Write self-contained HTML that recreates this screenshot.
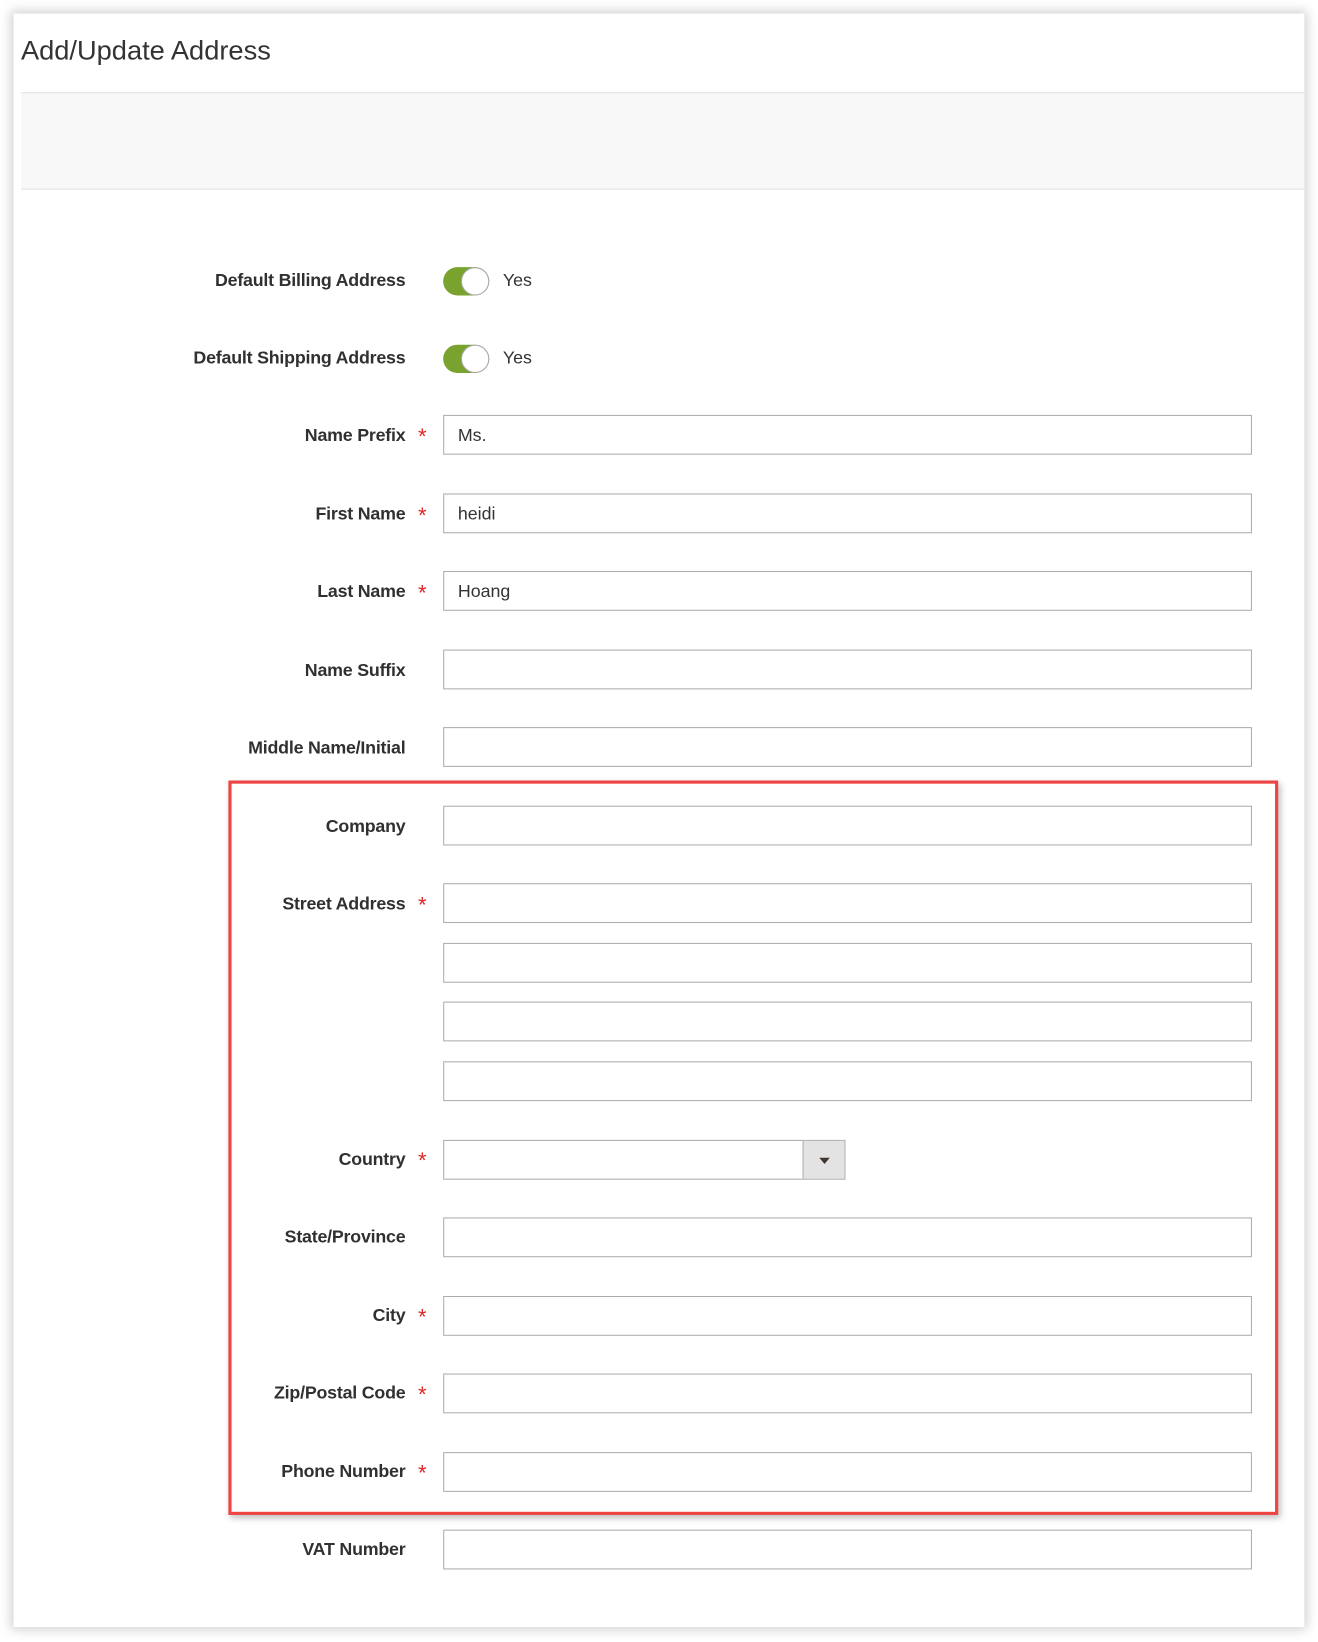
<!DOCTYPE html>
<html><head><meta charset="utf-8"><style>
html,body{margin:0;padding:0;background:#fff;width:1318px;height:1642px;overflow:hidden}
#w{position:absolute;left:0;top:0;width:1258px;height:1567px;transform:scale(1.04769);transform-origin:0 0;font-family:"Liberation Sans",sans-serif}
.panel{position:absolute;left:13px;top:13px;width:1232px;height:1540px;background:#fff;box-shadow:0 0 10px 3px rgba(0,0,0,.18)}
.t{position:absolute;left:20px;top:33px;font-size:26px;color:#333}
.band{position:absolute;left:20px;top:88px;width:1225px;height:91px;background:#f8f8f8;border-top:1px solid #e3e3e3;border-bottom:1px solid #e3e3e3}
.l{position:absolute;right:871px;font-size:17px;font-weight:bold;color:#303030;white-space:nowrap;line-height:20px;letter-spacing:-.2px}
.s{position:absolute;left:399px;color:#e22626;font-size:21px;line-height:20px}
.i{position:absolute;left:423px;width:770px;height:36px;border:1px solid #adadad;background:#fff;box-sizing:content-box;font-size:17px;color:#333;line-height:38px;text-indent:13px}
.tg{position:absolute;left:423px;width:44px;height:27px;border-radius:14px;background:#79a22e}
.tg::after{content:"";position:absolute;right:0;top:0;width:25px;height:25px;border-radius:50%;background:#fff;border:1px solid #aaa}
.y{position:absolute;left:480px;font-size:17px;color:#333;line-height:20px}
.red{position:absolute;left:218px;top:745px;width:996px;height:695px;border:3px solid #ef4444;box-shadow:2px 3px 6px rgba(0,0,0,.25)}
</style></head><body><div id="w">
<div class="panel"></div>
<div class="t">Add/Update Address</div>
<div class="band"></div>
<div class="red"></div>

<div class="l" style="top:258px">Default Billing Address</div>
<div class="tg" style="top:255px"></div><div class="y" style="top:258px">Yes</div>
<div class="l" style="top:332px">Default Shipping Address</div>
<div class="tg" style="top:329px"></div><div class="y" style="top:332px">Yes</div>

<div class="l" style="top:406px">Name Prefix</div><div class="s" style="top:408px">*</div><div class="i" style="top:396px">Ms.</div>
<div class="l" style="top:481px">First Name</div><div class="s" style="top:483px">*</div><div class="i" style="top:471px">heidi</div>
<div class="l" style="top:555px">Last Name</div><div class="s" style="top:557px">*</div><div class="i" style="top:545px">Hoang</div>
<div class="l" style="top:630px">Name Suffix</div><div class="i" style="top:620px"></div>
<div class="l" style="top:704px">Middle Name/Initial</div><div class="i" style="top:694px"></div>
<div class="l" style="top:779px">Company</div><div class="i" style="top:769px"></div>
<div class="l" style="top:853px">Street Address</div><div class="s" style="top:855px">*</div><div class="i" style="top:843px"></div>
<div class="i" style="top:900px"></div>
<div class="i" style="top:956px"></div>
<div class="i" style="top:1013px"></div>
<div class="l" style="top:1097px">Country</div><div class="s" style="top:1099px">*</div>
<div class="i" style="top:1088px;width:382px"><div style="position:absolute;right:0;top:0;width:39px;height:36px;background:#e3e3e3;border-left:1px solid #adadad"><div style="position:absolute;left:15px;top:16px;width:0;height:0;border-left:5px solid transparent;border-right:5px solid transparent;border-top:6px solid #41362f"></div></div></div>
<div class="l" style="top:1171px">State/Province</div><div class="i" style="top:1162px"></div>
<div class="l" style="top:1246px">City</div><div class="s" style="top:1248px">*</div><div class="i" style="top:1237px"></div>
<div class="l" style="top:1320px">Zip/Postal Code</div><div class="s" style="top:1322px">*</div><div class="i" style="top:1311px"></div>
<div class="l" style="top:1395px">Phone Number</div><div class="s" style="top:1397px">*</div><div class="i" style="top:1386px"></div>
<div class="l" style="top:1469px">VAT Number</div><div class="i" style="top:1460px"></div>
</div></body></html>
